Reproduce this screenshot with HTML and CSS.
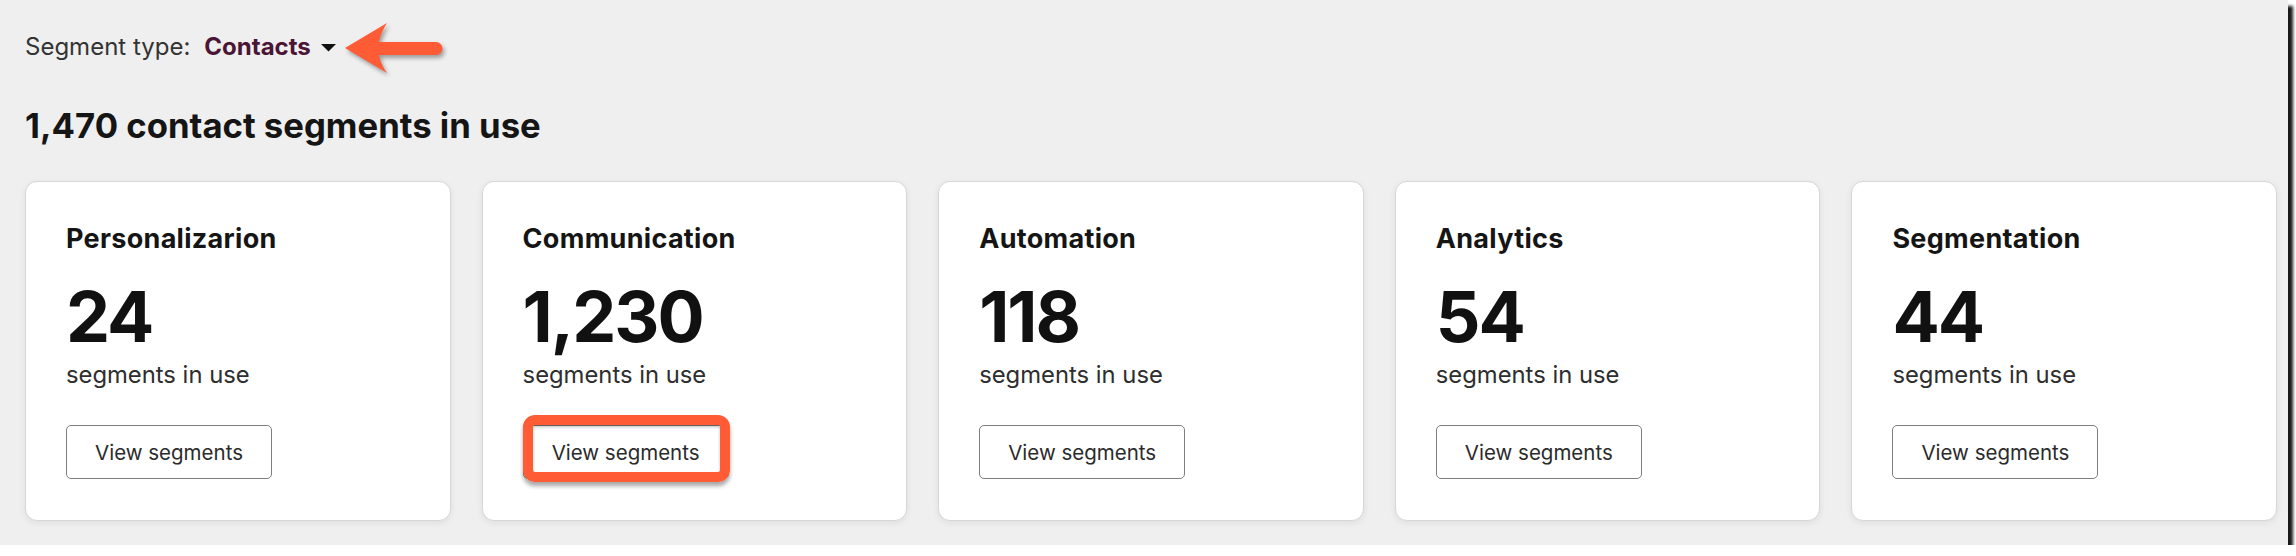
FILE: index.html
```html
<!DOCTYPE html>
<html lang="en">
<head>
<meta charset="utf-8">
<title>Segments</title>
<link rel="stylesheet" href="styles.css">
</head>
<body>
<div class="frame">
  <div class="type-row">
    <span class="type-label">Segment type:</span>
    <span class="type-value">Contacts</span>
    <svg class="caret" width="15" height="8" viewBox="0 0 15 8"><path d="M0 0 H15 L7.5 7.5 Z" fill="#111"/></svg>
  </div>
  <svg class="callout-arrow" width="110" height="62" viewBox="340 18 110 62">
    <path d="M345 48 L387 23 Q380.5 33 379 42 L436 42 A6.5 6.5 0 0 1 436 55 L379 55 Q380.5 64 387 73 Z" fill="#ff5b35"/>
  </svg>
  <h1 class="heading">1,470 contact segments in use</h1>
  <div class="cards">
    <div class="card">
      <div class="card-title">Personalizarion</div>
      <div class="card-count">24</div>
      <div class="card-sub">segments in use</div>
      <div class="btn-wrap"><button class="btn">View segments</button></div>
    </div>
    <div class="card">
      <div class="card-title">Communication</div>
      <div class="card-count">1,230</div>
      <div class="card-sub">segments in use</div>
      <div class="btn-wrap"><button class="btn">View segments</button><span class="highlight"></span></div>
    </div>
    <div class="card">
      <div class="card-title">Automation</div>
      <div class="card-count">118</div>
      <div class="card-sub">segments in use</div>
      <div class="btn-wrap"><button class="btn">View segments</button></div>
    </div>
    <div class="card">
      <div class="card-title">Analytics</div>
      <div class="card-count">54</div>
      <div class="card-sub">segments in use</div>
      <div class="btn-wrap"><button class="btn">View segments</button></div>
    </div>
    <div class="card">
      <div class="card-title">Segmentation</div>
      <div class="card-count">44</div>
      <div class="card-sub">segments in use</div>
      <div class="btn-wrap"><button class="btn">View segments</button></div>
    </div>
  </div>
</div>
</body>
</html>
```
FILE: styles.css
```css
* { box-sizing: border-box; }

html, body {
  margin: 0;
  padding: 0;
  background: #ffffff;
}

body {
  font-family: Inter, "Noto Sans", "DejaVu Sans", sans-serif;
  color: #1a1a1a;
}

.frame {
  position: relative;
  width: 2288px;
  height: 545px;
  background: #efefef;
  padding: 32px 11px 0 25px;
  box-shadow: 5px 6px 3px rgba(0, 0, 0, 0.9);
}

.type-row {
  display: flex;
  align-items: center;
  height: 30px;
  font-size: 24px;
  line-height: 30px;
}

.type-label {
  color: #333;
}

.type-value {
  margin-left: 14px;
  font-weight: 700;
  color: #4b1535;
}

.caret {
  margin-left: 10px;
  margin-top: 1px;
}

.callout-arrow {
  position: absolute;
  left: 340px;
  top: 18px;
  filter: drop-shadow(2px 3px 2px rgba(0, 0, 0, 0.35));
}

.heading {
  margin: 41px 0 0;
  font-size: 34.7px;
  line-height: 44px;
  font-weight: 700;
  color: #151515;
}

.cards {
  margin-top: 34px;
  display: grid;
  grid-template-columns: repeat(5, 1fr);
  gap: 31px;
}

.card {
  background: #fff;
  border: 1px solid #d6d6d6;
  border-radius: 12px;
  padding: 41px 40px 41px 40px;
  box-shadow: 0 2px 7px rgba(0, 0, 0, 0.07);
  height: 340px;
}

.card-title {
  font-size: 27px;
  line-height: 32px;
  font-weight: 700;
  letter-spacing: 0.3px;
  color: #151515;
}

.card-count {
  margin-top: 22px;
  font-size: 70px;
  line-height: 80px;
  font-weight: 700;
  letter-spacing: -2px;
  color: #111;
}

.card-sub {
  margin-top: 3px;
  font-size: 23.8px;
  line-height: 30px;
  color: #2e2e2e;
}

.btn-wrap {
  position: relative;
  margin-top: 35px;
  width: 206px;
}

.btn {
  display: flex;
  align-items: center;
  justify-content: center;
  width: 206px;
  height: 54px;
  padding: 0;
  background: #fff;
  border: 1px solid #7d7d7d;
  border-radius: 5px;
  font-family: inherit;
  font-size: 20.5px;
  color: #2b2b2b;
}

.highlight {
  position: absolute;
  left: 0;
  right: -1px;
  top: -10px;
  bottom: -3px;
  border: 10px solid #ff5b35;
  border-radius: 12px;
  box-shadow: 0 4px 4px rgba(0, 0, 0, 0.35), inset 0 2px 3px rgba(0, 0, 0, 0.25);
}
```
